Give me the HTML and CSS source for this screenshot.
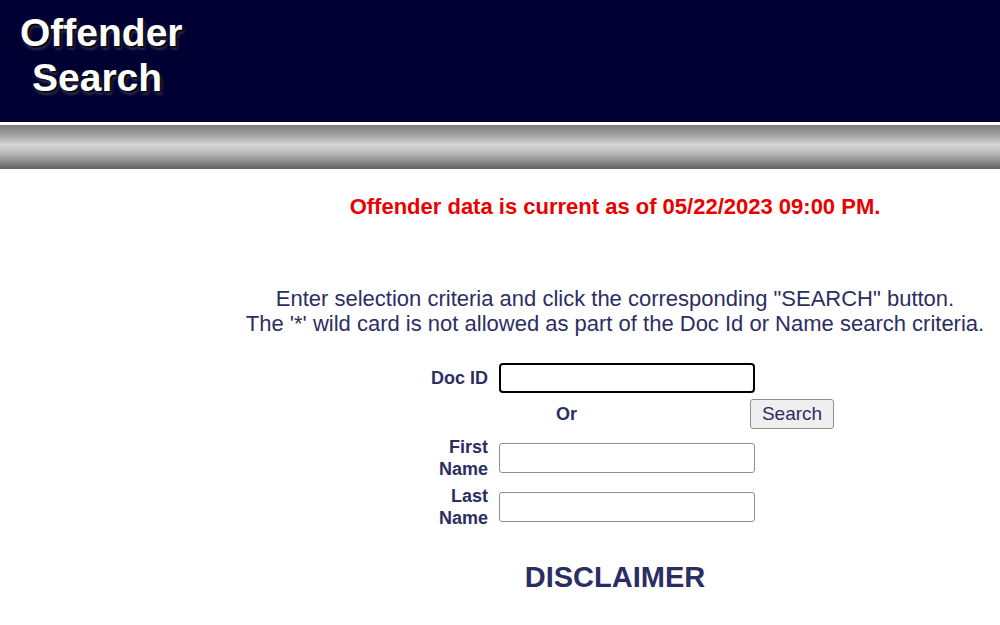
FILE: index.html
```html
<!DOCTYPE html>
<html lang="en">
<head>
<meta charset="utf-8">
<title>Offender Search</title>
<link rel="stylesheet" href="styles.css">
</head>
<body>
<header class="masthead">
  <h1 class="title"><span class="t1">Offender</span><span class="t2">Search</span></h1>
</header>
<div class="chrome-bar"></div>
<div class="page">
  <aside class="side"></aside>
  <main class="main">
    <p class="current">Offender data is current as of 05/22/2023 09:00 PM.</p>
    <p class="instructions">Enter selection criteria and click the corresponding "SEARCH" button.<br>The '*' wild card is not allowed as part of the Doc Id or Name search criteria.</p>
    <form class="search-form" onsubmit="return false">
      <div class="row row-doc">
        <label class="lbl" for="docid">Doc ID</label>
        <input class="field field-focus" id="docid" type="text" autofocus>
      </div>
      <div class="row row-or">
        <span class="or">Or</span>
        <button class="btn" type="button">Search</button>
      </div>
      <div class="row row-name">
        <label class="lbl lbl2" for="fname">First Name</label>
        <input class="field" id="fname" type="text">
      </div>
      <div class="row row-name row-last">
        <label class="lbl lbl2" for="lname">Last Name</label>
        <input class="field" id="lname" type="text">
      </div>
    </form>
    <h2 class="disclaimer">DISCLAIMER</h2>
  </main>
</div>
</body>
</html>
```
FILE: styles.css
```css
html, body {
  margin: 0;
  padding: 0;
  background: #ffffff;
  font-family: "Liberation Sans", Arial, sans-serif;
}

.masthead {
  height: 122px;
  background: #000033;
  box-sizing: border-box;
  padding-top: 10px;
}

.title {
  margin: 0;
  font-size: 39px;
  line-height: 45px;
  font-weight: bold;
  color: #ffffff;
  text-shadow: 2px 2px 2px #000000, 2px 3px 3px rgba(150,150,170,0.55);
}
.t1 { display: block; margin-left: 20px; }
.t2 { display: block; margin-left: 32px; }

.chrome-bar {
  margin-top: 3px;
  height: 44px;
  background: linear-gradient(#7c7c7c 0%, #9c9c9c 20%, #d6d6d6 45%, #b8b8b8 65%, #858585 85%, #5e5e5e 100%);
}

.page {
  display: flex;
}
.side {
  width: 230px;
  flex: none;
}
.main {
  flex: 1;
  text-align: center;
  color: #2c2e63;
}

.current {
  margin: 25px 0 0;
  font-size: 22px;
  line-height: 25px;
  font-weight: bold;
  color: #ea0000;
}

.instructions {
  margin: 67px 0 0;
  font-size: 22px;
  line-height: 25px;
}

.search-form {
  width: 440px;
  margin: 27px auto 0;
  text-align: left;
}

.row {
  display: flex;
  align-items: center;
}
.lbl {
  width: 60px;
  flex: none;
  margin-left: 33px;
  text-align: right;
  font-size: 18px;
  font-weight: bold;
  line-height: 22px;
  margin-right: 11px;
}

.field {
  flex: none;
  width: 256px;
  height: 30px;
  box-sizing: border-box;
  border: 1px solid #8f8f8f;
  border-radius: 3px;
  padding: 2px 6px;
  font-size: 16px;
  font-family: "Liberation Sans", Arial, sans-serif;
  background: #ffffff;
}
.field:focus,
.field-focus {
  outline: none;
  border: 2px solid #000000;
  border-radius: 4px;
}

.row-doc { height: 30px; }
.row-or {
  margin-top: 6px;
  height: 30px;
}
.or {
  flex: none;
  margin-left: 161px;
  font-size: 18px;
  font-weight: bold;
}
.btn {
  flex: none;
  margin-left: 173px;
  width: 84px;
  height: 30px;
  box-sizing: border-box;
  background: #efefef;
  border: 1px solid #8f8f8f;
  border-radius: 3px;
  font-size: 19px;
  font-family: "Liberation Sans", Arial, sans-serif;
  color: #2c2e63;
  padding: 0;
}
.row-name {
  margin-top: 7px;
  height: 44px;
}
.row-last { margin-top: 5px; }

.disclaimer {
  margin: 32px 0 0;
  font-size: 29px;
  line-height: 33px;
  font-weight: bold;
}
```
